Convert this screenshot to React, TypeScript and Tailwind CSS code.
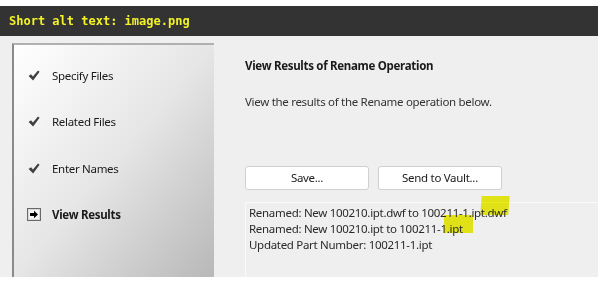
import React from "react";

const Check = () => (
  <svg width="12" height="11" viewBox="0 0 12 11" className="block">
    <path d="M0.6 6 L3 4.2 L4.9 6.6 L10 0.4 L11.6 1.8 L5.1 10.4 Z" fill="#404040" />
  </svg>
);

const ArrowBox = () => (
  <svg width="14" height="13" viewBox="0 0 14 13" className="block">
    <rect x="0.5" y="0.5" width="13" height="12" fill="#f4f4f4" stroke="#6a6a6a" />
    <rect x="1.5" y="1.5" width="11" height="10" fill="none" stroke="#d8d8d8" />
    <path d="M3 5 H7 V2.8 L11 6.5 L7 10.2 V8 H3 Z" fill="#000" />
  </svg>
);

const items = [
  { label: "Specify Files", done: true },
  { label: "Related Files", done: true },
  { label: "Enter Names", done: true },
  { label: "View Results", done: false },
];

export default function App() {
  const ui = { fontFamily: '"Noto Sans", "Open Sans", sans-serif' } as React.CSSProperties;
  return (
    <div className="w-[603px] h-[283px] bg-white overflow-hidden">
      <div className="pt-[6px] pr-[5px]">
        <div className="h-[30px] bg-[#333333] flex items-center pl-[9px]">
          <span
            className="text-[12px] font-bold text-[#f2f227] leading-none"
            style={{ fontFamily: '"DejaVu Sans Mono", monospace' }}
          >
            Short alt text: image.png
          </span>
        </div>
        <div className="h-[241px] bg-[#efefef] flex" style={ui}>
          <div className="ml-[12px] mt-[7px] w-[202px] h-[234px] border-l-2 border-t-2 border-l-[#8a8a8a] border-t-[#b0b0b0] bg-gradient-to-br from-[#ffffff] via-[#e6e6e6] to-[#b8b8b8] pt-[7px]">
            {items.map((it) => (
              <div key={it.label} className="h-[46.5px] flex items-center">
                <div className="w-[38px] flex justify-center pl-[1px]">
                  {it.done ? <Check /> : <ArrowBox />}
                </div>
                <span
                  className={`text-[11.5px] tracking-[-0.3px] text-[#1a1a1a] ${it.done ? "" : "font-bold"}`}
                >
                  {it.label}
                </span>
              </div>
            ))}
          </div>
          <div className="ml-[31px] flex-1 flex flex-col">
            <div className="mt-[22px] text-[11.5px] font-bold text-[#1a1a1a] tracking-[-0.3px] leading-[16px]">
              View Results of Rename Operation
            </div>
            <div className="mt-[20px] text-[11.5px] text-[#333] tracking-[-0.3px] leading-[16px]">
              View the results of the Rename operation below.
            </div>
            <div className="mt-[56px] flex gap-[9px]">
              <button className="w-[124px] h-[24px] bg-white border border-[#d0d0d0] rounded-[3px] text-[11.5px] text-[#1a1a1a] tracking-[-0.3px]">
                Save...
              </button>
              <button className="w-[124px] h-[24px] bg-white border border-[#d0d0d0] rounded-[3px] text-[11.5px] text-[#1a1a1a] tracking-[-0.3px]">
                Send to Vault...
              </button>
            </div>
            <div className="relative mt-[12px] flex-1 border-t border-l border-[#fafafa] bg-[#efefef] pl-[3px] pt-[2px] text-[11.5px] text-[#2a2a2a] tracking-[-0.3px] leading-[16px]">
              <div
                className="absolute bg-[#f0f000] opacity-90 mix-blend-multiply"
                style={{ left: 235, top: -7, width: 28, height: 19, transform: "skewX(-4deg)" }}
              />
              <div
                className="absolute bg-[#f0f000] opacity-90 mix-blend-multiply"
                style={{ left: 198, top: 12, width: 29, height: 18 }}
              />
              <div className="relative">Renamed: New 100210.ipt.dwf to 100211-1.ipt.dwf</div>
              <div className="relative">Renamed: New 100210.ipt to 100211-1.ipt</div>
              <div className="relative">Updated Part Number: 100211-1.ipt</div>
            </div>
          </div>
        </div>
      </div>
    </div>
  );
}
